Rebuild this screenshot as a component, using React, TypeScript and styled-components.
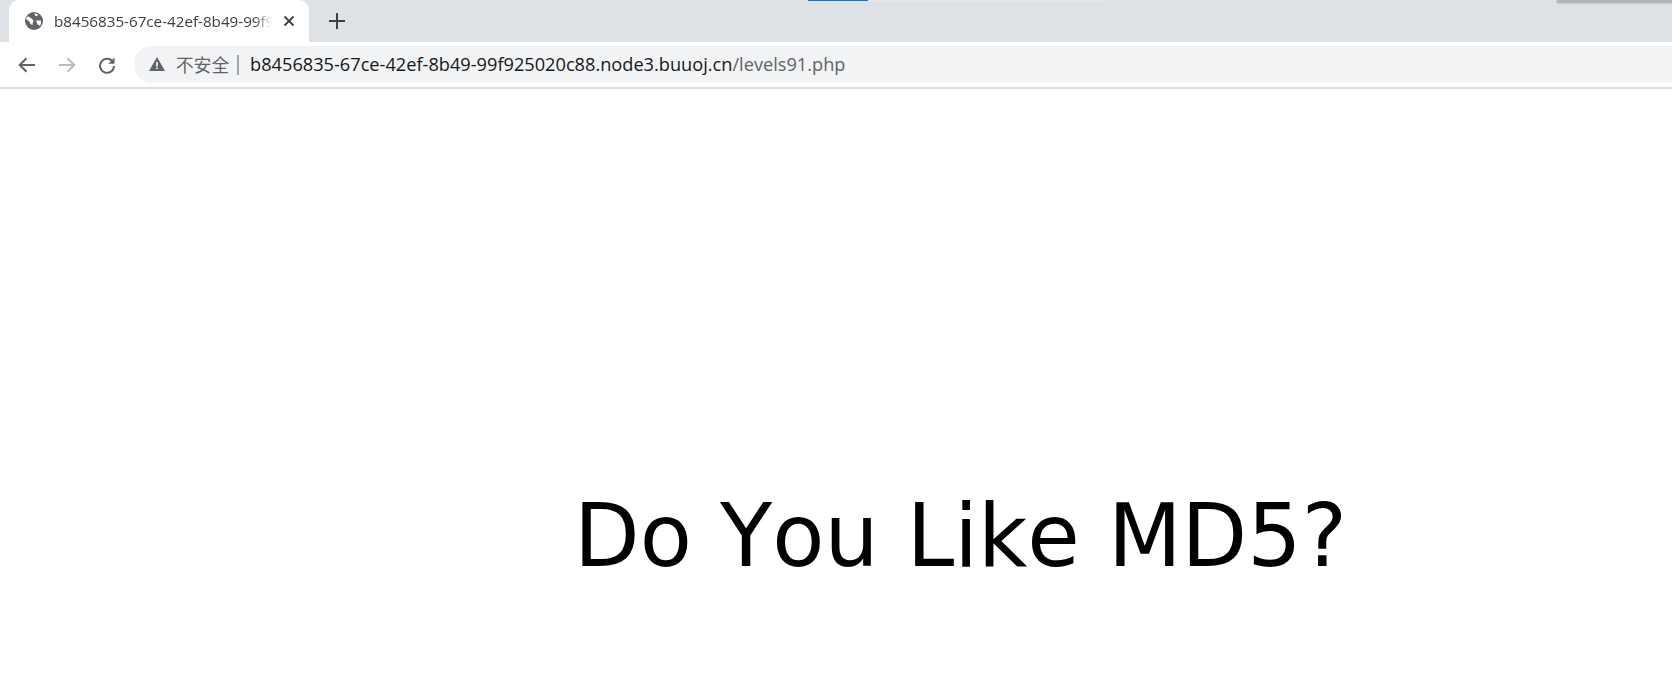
import React from "react";
import styled, { createGlobalStyle } from "styled-components";

const Global = createGlobalStyle`
  html, body { margin: 0; padding: 0; background: #fff; overflow: hidden; }
  #root { width: 1672px; height: 682px; overflow: hidden; }
`;
const Page = styled.div`
  width: 1672px; height: 682px; display: flex; flex-direction: column;
  background: #fff; font-family: "Liberation Sans", "Noto Sans CJK SC", sans-serif;
`;
const TabStrip = styled.div`
  position: relative; height: 42px; flex: none; background: #dee1e6;
  display: flex; align-items: flex-end; padding-left: 9px;
`;
const Capture = styled.div<{ $left: number; $width: number; $color: string }>`
  position: absolute; top: 0; left: ${p => p.$left}px; width: ${p => p.$width}px;
  height: 1px; background: ${p => p.$color};
`;
const WindowShadow = styled.div`
  position: absolute; top: 0; right: 0; width: 115px; height: 3px;
  background: #b1b4b9; box-shadow: 0 0 3px #b1b4b9;
`;
const Tab = styled.div`
  width: 300px; height: 42px; box-sizing: border-box; background: #fff;
  border-radius: 10px 10px 0 0; display: flex; align-items: center; padding: 0 12px 0 15px;
`;
const TabTitle = styled.span`
  width: 218px; margin-left: 10px; font-family: "Open Sans", sans-serif; font-size: 15.2px; color: #3c4043;
  white-space: nowrap; overflow: hidden;
  -webkit-mask-image: linear-gradient(to right, #000 92%, transparent);
  mask-image: linear-gradient(to right, #000 92%, transparent);
`;
const CloseSlot = styled.span`
  display: flex; margin-left: 11px;
`;
const NewTab = styled.span`
  display: flex; margin: 0 0 0 20px; align-self: center;
`;
const Toolbar = styled.div`
  height: 45px; flex: none; box-sizing: border-box; padding: 5px 0 5px 15px;
  display: flex; align-items: center; background: #fff;
`;
const NavIcon = styled.span`
  display: flex; width: 24px; justify-content: center; margin-right: 16px;
`;
const AddressBar = styled.div`
  flex: 1; height: 35px; margin-left: -1px; background: #f1f3f4; border-radius: 17.5px 0 0 17.5px;
  display: flex; align-items: center; padding: 0 0 2px 15px; font-size: 18px; white-space: nowrap;
`;
const Insecure = styled.span`
  margin-left: 11px; color: #5f6368; font-family: "Noto Sans CJK SC", sans-serif; font-size: 17.7px;
`;
const Divider = styled.span`
  width: 2px; height: 20px; background: #a0a3a7; margin: 2px 11px 0 8px;
`;
const Host = styled.span`
  font-family: "Open Sans", sans-serif; font-size: 18.2px; color: #17181a;
`;
const UrlPath = styled.span`
  font-family: "Open Sans", sans-serif; font-size: 18.2px; color: #5f6368;
`;
const Rule = styled.div`
  height: 2px; flex: none; background: #dadce0;
`;
const Content = styled.main`
  flex: 1; padding: 396px 0 0 574px;
`;
const Heading = styled.div`
  font-family: "DejaVu Sans", sans-serif; font-size: 88px; line-height: 102px; color: #000;
  font-kerning: none; word-spacing: 1px; white-space: nowrap; transform-origin: 0 0; transform: scaleX(0.97);
`;

export default function App() {
  return (
    <Page>
      <Global />
      <TabStrip>
        <Capture $left={808} $width={60} $color="#0078d7" />
        <Capture $left={868} $width={240} $color="#e6e7e9" />
        <WindowShadow />
        <Tab>
          <svg width="20" height="20" viewBox="0 0 20 20">
            <circle cx="10" cy="10" r="9" fill="#5f6368" />
            <path d="M3 5.500c2 .2 3.500 1 5 2.500 .5 1 1.500 1 1.500 2.500-1 .8-1 2-.8 3.500-2-.5-3-2-3.500-3.500L2 8z" fill="#fff" />
            <path d="M12 9.500h4.800c.6 2 .2 4-1 5.500-.5-1-1.300-1.300-2.300-1.500-.3-1.500-1-2.500-1.500-4z" fill="#fff" />
            <path d="M10.500 2.300c1.500.2 2.800.8 3.800 1.700-.8.800-1.800 1-3 1z" fill="#fff" />
          </svg>
          <TabTitle>b8456835-67ce-42ef-8b49-99f925020c88.node3.buuoj.cn/levels91.php</TabTitle>
          <CloseSlot>
            <svg width="12" height="12" viewBox="0 0 12 12"><path d="M1.500 1.500l9 9M10.500 1.500l-9 9" stroke="#3c4043" strokeWidth="1.800" /></svg>
          </CloseSlot>
        </Tab>
        <NewTab>
          <svg width="16" height="16" viewBox="0 0 16 16"><path d="M8 0v16M0 8h16" stroke="#3c4043" strokeWidth="2" /></svg>
        </NewTab>
      </TabStrip>
      <Toolbar>
        <NavIcon>
          <svg width="18" height="16" viewBox="0 0 18 16" fill="none"><path d="M17 8H2M8.500 1.200L1.700 8l6.800 6.800" stroke="#5f6368" strokeWidth="2" /></svg>
        </NavIcon>
        <NavIcon>
          <svg width="18" height="16" viewBox="0 0 18 16" fill="none"><path d="M1 8h15M9.500 1.200L16.300 8l-6.800 6.800" stroke="#babcbe" strokeWidth="2" /></svg>
        </NavIcon>
        <NavIcon>
          <svg width="18" height="18" viewBox="0 0 18 18" fill="none">
            <path d="M15 6.200A7 7 0 1 0 16 10" stroke="#5f6368" strokeWidth="2" />
            <path d="M16.500 1.500v6.300h-6.300z" fill="#5f6368" />
          </svg>
        </NavIcon>
        <AddressBar>
          <svg width="16" height="14" viewBox="0 0 16 14"><path d="M8 0l8 14H0z" fill="#5f6368" /><path d="M7.200 5h1.600v4.500H7.200zM7.200 10.500h1.600V12H7.200z" fill="#fff" /></svg>
          <Insecure>不安全</Insecure>
          <Divider />
          <Host>b8456835-67ce-42ef-8b49-99f925020c88.node3.buuoj.cn</Host>
          <UrlPath>/levels91.php</UrlPath>
        </AddressBar>
      </Toolbar>
      <Rule />
      <Content>
        <Heading>Do You Like MD5?</Heading>
      </Content>
    </Page>
  );
}
